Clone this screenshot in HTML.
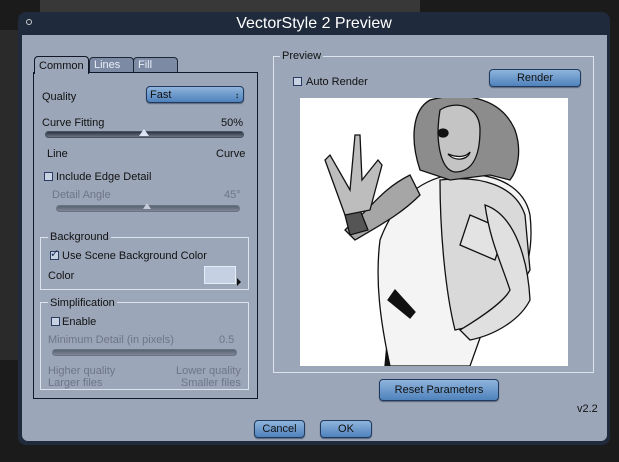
<!DOCTYPE html>
<html><head><style>
*{margin:0;padding:0;box-sizing:border-box}
body{width:619px;height:462px;background:#1b1b1c;position:relative;overflow:hidden;font-family:"Liberation Sans",sans-serif;font-size:11px;color:#111}
.a{position:absolute}
.dlg{left:18px;top:12px;width:592px;height:433px;background:#1f2b3c;border-radius:8px}
.body{left:22px;top:35px;width:585px;height:406px;background:#9ba6b8;border-radius:0 0 6px 6px}
.title{left:18px;top:12px;width:592px;height:23px;text-align:center;color:#fff;font-size:16px;line-height:23px}
.btn{background:linear-gradient(#8fb4dc,#4f82bc);border:1px solid #1f3a5e;border-radius:4px;text-align:center;color:#111;box-shadow:0 1px 1px #5a6478}
.grp{border:1px solid #dde3ec}
.lbl{background:#9ba6b8;padding:0 2px}
.cb{width:9px;height:9px;border:1px solid #2a3c62;background:#c8d2e2}
.slider{height:7px;border-radius:4px;background:linear-gradient(#2e3642,#6a7484);border:1px solid #4a5262}
.dim{color:#6d7688}
.tab{height:16px;border:1px solid #1d2636;border-bottom:none;border-radius:4px 4px 0 0;line-height:15px;padding-left:4px}
#c .t{transform:translateY(1px)}
</style></head><body>
<div class="a" style="left:40px;top:0;width:380px;height:12px;background:#555;opacity:.5"></div>
<div class="a" style="left:0;top:30px;width:18px;height:330px;background:#2a2a2a"></div>
<div class="a dlg"></div>
<div class="a body"></div>
<div class="a title">VectorStyle 2 Preview</div>
<div class="a" style="left:26px;top:19px;width:6px;height:6px;border:1px solid #ccc;border-radius:50%"></div>

<div class="a tab" style="left:89px;top:57px;width:45px;background:#7d8aa3;color:#e8eef8">Lines</div>
<div class="a tab" style="left:133px;top:57px;width:45px;background:#7d8aa3;color:#e8eef8">Fill</div>
<div class="a" style="left:33px;top:72px;width:225px;height:327px;border:1px solid #111827"></div>
<div class="a tab" style="left:34px;top:56px;width:55px;height:18px;background:#9ba6b8;border-color:#111827;line-height:18px">Common</div>

<div class="a" style="left:42px;top:91px">Quality</div>
<div class="a btn" style="left:146px;top:86px;width:98px;height:17px;text-align:left;padding-left:3px;line-height:17px">Fast<span style="position:absolute;right:4px;font-size:8px">&#x2195;</span></div>
<div class="a" style="left:42px;top:117px">Curve Fitting</div>
<div class="a" style="left:221px;top:117px">50%</div>
<div class="a slider" style="left:45px;top:131px;width:199px"></div>
<div class="a" style="left:139px;top:129px;width:0;height:0;border-left:5px solid transparent;border-right:5px solid transparent;border-bottom:7px solid #dde6f2"></div>
<div class="a" style="left:47px;top:148px">Line</div>
<div class="a" style="left:216px;top:148px">Curve</div>
<div class="a cb" style="left:44px;top:172px"></div>
<div class="a" style="left:56px;top:171px">Include Edge Detail</div>
<div class="a dim" style="left:52px;top:189px">Detail Angle</div>
<div class="a dim" style="left:224px;top:189px">45°</div>
<div class="a slider" style="left:56px;top:205px;width:184px;opacity:.6"></div>
<div class="a" style="left:143px;top:203px;width:0;height:0;border-left:4px solid transparent;border-right:4px solid transparent;border-bottom:6px solid #c4ccd8"></div>

<div class="a grp" style="left:40px;top:237px;width:209px;height:53px"></div>
<div class="a lbl" style="left:48px;top:231px">Background</div>
<div class="a cb" style="left:50px;top:251px"></div>
<div class="a" style="left:50px;top:247px;font-size:11px;color:#1e3460">&#10003;</div>
<div class="a" style="left:62px;top:250px">Use Scene Background Color</div>
<div class="a" style="left:48px;top:270px">Color</div>
<div class="a" style="left:204px;top:266px;width:32px;height:18px;background:#c5d0e2;border:1px solid #e6ecf5"></div>
<div class="a" style="left:237px;top:278px;border-left:4px solid #111;border-top:4px solid transparent;border-bottom:4px solid transparent"></div>

<div class="a grp" style="left:40px;top:302px;width:209px;height:88px"></div>
<div class="a lbl" style="left:48px;top:297px">Simplification</div>
<div class="a cb" style="left:51px;top:317px"></div>
<div class="a" style="left:62px;top:316px">Enable</div>
<div class="a dim" style="left:48px;top:334px">Minimum Detail (in pixels)</div>
<div class="a dim" style="left:219px;top:334px">0.5</div>
<div class="a slider" style="left:52px;top:349px;width:185px;opacity:.6"></div>
<div class="a dim" style="left:48px;top:365px;line-height:12px">Higher quality<br>Larger files</div>
<div class="a dim" style="left:176px;top:365px;line-height:12px;text-align:right">Lower quality<br>Smaller files</div>

<div class="a grp" style="left:273px;top:56px;width:321px;height:317px"></div>
<div class="a lbl" style="left:280px;top:50px">Preview</div>
<div class="a cb" style="left:293px;top:77px"></div>
<div class="a" style="left:306px;top:76px">Auto Render</div>
<div class="a btn" style="left:489px;top:69px;width:92px;height:18px;line-height:16px">Render</div>
<div class="a" style="left:300px;top:98px;width:268px;height:268px;background:#fff;overflow:hidden">
<svg width="268" height="268" viewBox="300 98 268 268" stroke="#111" stroke-width="1.3">
<path d="M470 366 L455 300 L390 310 L385 366 Z" fill="#111"/>
<path d="M380 240 C395 200 420 180 450 175 C500 170 525 190 530 215 C535 260 520 300 490 310 L470 366 L390 366 C380 320 375 280 380 240Z" fill="#f4f4f4"/>
<path d="M440 180 C480 175 515 185 525 215 L530 270 L500 320 L455 330 C445 290 440 230 440 180Z" fill="#d9d9d9"/>
<path d="M470 215 L505 230 L495 260 L460 245Z" fill="#e3e3e3"/>
<path d="M485 205 C515 215 528 260 530 300 C520 320 495 335 470 340 L460 330 C485 315 505 300 510 290 C500 260 490 240 485 205Z" fill="#e0e0e0"/>
<path d="M388 300 L395 290 L415 312 L410 318Z" fill="#111"/>
<path d="M410 175 C380 190 370 210 350 225 L345 230 L355 240 C380 225 400 215 420 195Z" fill="#a6a6a6"/>
<path d="M345 215 L360 210 L368 230 L350 235Z" fill="#555"/>
<path d="M345 215 L325 160 L330 155 L350 190 L355 135 L360 135 L362 180 L378 160 L382 165 L370 210 Z" fill="#bdbdbd"/>
<path d="M420 170 C410 140 412 110 430 100 C460 92 500 95 515 130 C522 150 518 170 510 180 L490 175 L450 180 Z" fill="#8c8c8c"/>
<path d="M440 110 C455 100 480 105 480 130 C480 160 470 172 455 172 C440 170 435 140 440 110Z" fill="#c4c4c4"/>
<ellipse cx="443" cy="133" rx="5" ry="4" fill="#111"/>
<path d="M448 154 C458 158 466 157 470 152 C468 160 455 162 448 154Z" fill="#fff"/>
</svg></div>

<div class="a btn" style="left:379px;top:379px;width:120px;height:22px;line-height:20px">Reset Parameters</div>
<div class="a" style="left:577px;top:403px">v2.2</div>
<div class="a btn" style="left:254px;top:420px;width:51px;height:18px;line-height:16px">Cancel</div>
<div class="a btn" style="left:320px;top:420px;width:52px;height:18px;line-height:16px">OK</div>
</body></html>
